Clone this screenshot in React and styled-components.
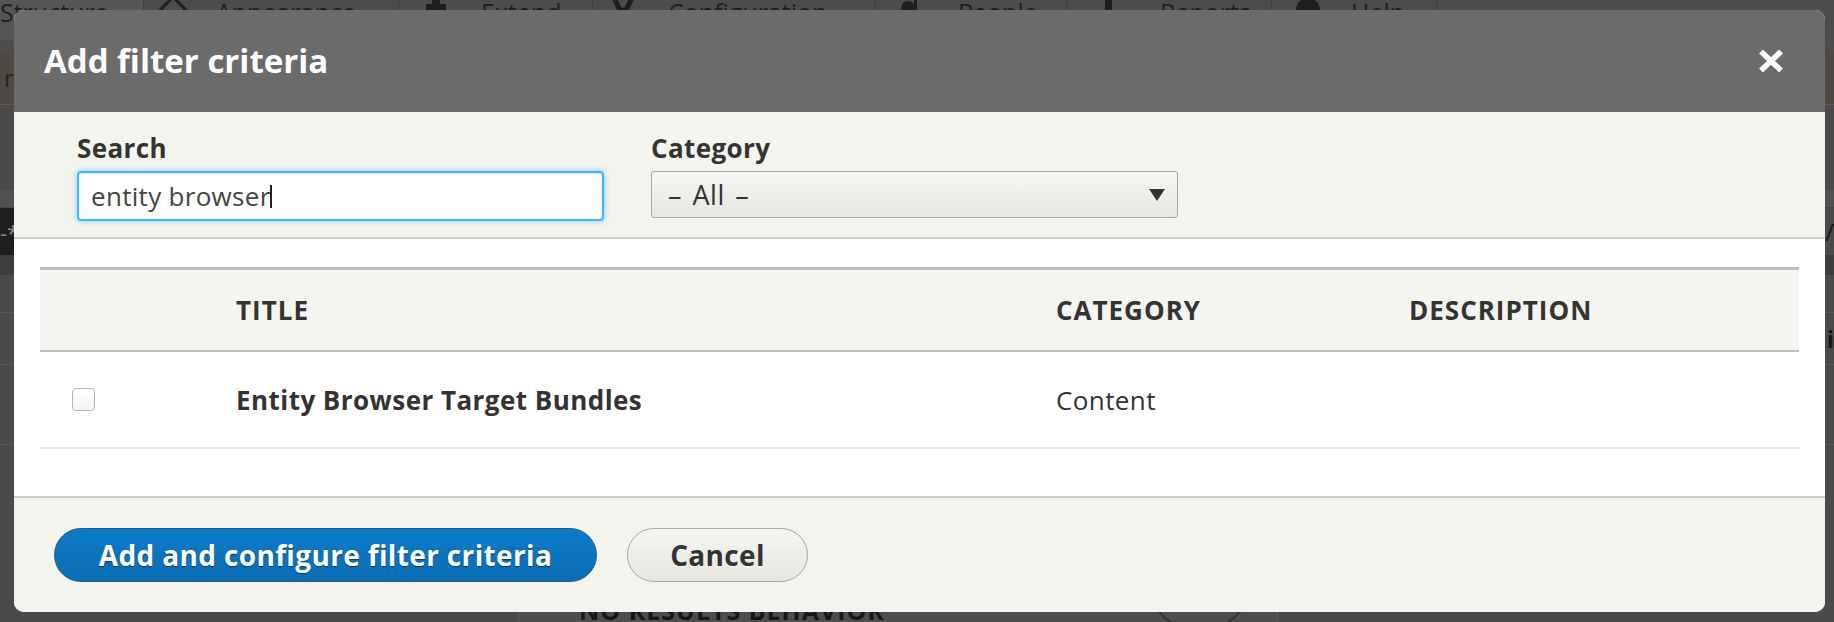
import React from 'react';
import styled, { createGlobalStyle } from 'styled-components';

const GlobalStyle = createGlobalStyle`
  html, body { margin: 0; padding: 0; }
  body {
    background: #4a4a4a;
    font-family: "Open Sans", "DejaVu Sans", sans-serif;
    overflow: hidden;
  }
  * { box-sizing: border-box; }
`;

/* ---------- dimmed page behind the dialog ---------- */

const Page = styled.div`
  position: relative;
  width: 1834px;
  height: 622px;
  overflow: hidden;
  background: #4a4a4a;
  display: flex;
  flex-direction: column;
`;

const Toolbar = styled.nav`
  height: 40px;
  flex: none;
  display: flex;
  background: #4c4c4c;
`;

const ToolItem = styled.div`
  width: ${p => p.$w}px;
  flex: none;
  display: flex;
  align-items: flex-start;
  gap: 28px;
  padding-left: ${p => p.$pad}px;
  border-right: 1px solid #3f3f3f;
  background: ${p => (p.$active ? '#565656' : 'transparent')};
  color: #1e1e1e;
  font-size: 25px;
  line-height: 24px;
  white-space: nowrap;
  overflow: hidden;
`;

const ToolIcon = styled.svg`
  flex: none;
  width: 30px;
  height: 24px;
  margin-top: -6px;
`;

const Band = styled.div`
  height: ${p => p.$h}px;
  flex: none;
  display: flex;
  align-items: center;
  background: ${p => p.$bg};
  border-bottom: ${p => (p.$line ? `1px solid ${p.$line}` : 'none')};
`;

const DarkBlock = styled.div`
  width: 320px;
  height: 100%;
  background: #1e1e1e;
  color: #8a8a8a;
  font-size: 22px;
  display: flex;
  align-items: center;
`;

const EdgeText = styled.span`
  margin-left: ${p => p.$at}px;
  color: ${p => p.$color || '#161616'};
  font-size: 24px;
  font-weight: ${p => (p.$bold ? 700 : 400)};
`;

const Spacer = styled.div`
  flex: 1;
`;

const BottomArea = styled.div`
  height: 30px;
  flex: none;
  display: flex;
`;

const BottomPanel = styled.div`
  margin-left: 518px;
  width: 760px;
  border-left: 1px solid #5a5a5a;
  border-right: 1px solid #5a5a5a;
  background: #4d4d4d;
  display: flex;
  align-items: flex-start;
  padding-left: 60px;
  padding-top: 6px;
  gap: 265px;
`;

const BottomHeading = styled.span`
  color: #161616;
  font-size: 25px;
  font-weight: 700;
  line-height: 24px;
  letter-spacing: 1px;
`;

const BottomKnob = styled.div`
  width: 99px;
  height: 60px;
  margin-top: -30px;
  border: 2px solid #333;
  border-radius: 0 0 40px 40px;
`;

/* ---------- dialog ---------- */

const Dialog = styled.div`
  position: absolute;
  left: 14px;
  top: 10px;
  width: 1811px;
  height: 602px;
  border-radius: 10px;
  overflow: hidden;
  background: #ffffff;
  display: flex;
  flex-direction: column;
  color: #333;
`;

const Header = styled.div`
  height: 102px;
  flex: none;
  background: #6b6b6b;
  display: flex;
  align-items: center;
  justify-content: space-between;
  padding: 0 41px 0 30px;
`;

const Title = styled.h1`
  margin: 0;
  color: #fff;
  font-size: 33px;
  font-weight: 700;
  letter-spacing: 0;
  line-height: 40px;
`;

const CloseButton = styled.button`
  width: 26px;
  height: 24px;
  padding: 0;
  border: 0;
  background: none;
  display: flex;
  cursor: pointer;
`;

const FilterBar = styled.div`
  height: 127px;
  flex: none;
  background: #f3f4ee;
  border-bottom: 2px solid #cfcfcb;
  display: flex;
  gap: 47px;
  padding: 20px 0 0 63px;
`;

const Field = styled.div`
  width: 527px;
  display: flex;
  flex-direction: column;
`;

const Label = styled.label`
  font-size: 26px;
  font-weight: 700;
  line-height: 32px;
  letter-spacing: 0.4px;
  color: #333;
  margin-bottom: 7px;
`;

const SearchBox = styled.div`
  height: 50px;
  background: #fff;
  border: 2px solid #40b6ff;
  border-radius: 4px;
  box-shadow: inset 0 1px 3px rgba(0, 0, 0, 0.12), 0 0 6px #7ccbff;
  display: flex;
  align-items: center;
  padding-left: 12px;
  font-size: 26px;
  letter-spacing: 0.3px;
  color: #444;
`;

const Caret = styled.span`
  width: 2px;
  height: 23px;
  background: #222;
  margin-left: -1px;
`;

const SelectBox = styled.div`
  height: 47px;
  border: 1px solid #a6a6a6;
  border-radius: 3px;
  background: linear-gradient(to bottom, #f6f6f3, #e7e7e1);
  display: flex;
  align-items: center;
  justify-content: space-between;
  padding: 0 12px 0 16px;
  font-size: 27px;
  letter-spacing: 0.5px;
  word-spacing: 3px;
  color: #333;
`;

const Arrow = styled.span`
  width: 0;
  height: 0;
  border-left: 8.5px solid transparent;
  border-right: 8.5px solid transparent;
  border-top: 12px solid #333;
`;

const Content = styled.div`
  flex: 1;
  background: #fff;
  padding: 28px 26px 0;
`;

const Table = styled.div`
  border-top: 3px solid #bfbfba;
`;

const Row = styled.div`
  display: grid;
  grid-template-columns: 196px 820px 353px 1fr;
  align-items: center;
  height: ${p => (p.$head ? 82 : 97)}px;
  background: ${p => (p.$head ? '#f4f4f0' : '#fff')};
  border-bottom: 2px solid ${p => (p.$head ? '#bfbfba' : '#e6e6e1')};
`;

const HeadCell = styled.div`
  font-size: 26px;
  font-weight: 700;
  letter-spacing: 1px;
  text-transform: uppercase;
  color: #333;
`;

const Cell = styled.div`
  font-size: 26px;
  font-weight: ${p => (p.$bold ? 700 : 400)};
  letter-spacing: ${p => (p.$bold ? '0.45px' : '0.4px')};
  color: #333;
  padding-left: ${p => p.$pad || 0}px;
  display: flex;
  align-items: center;
`;

const Checkbox = styled.span`
  width: 23px;
  height: 23px;
  border: 1px solid #b4b4b4;
  border-radius: 4px;
  background: linear-gradient(to bottom, #ffffff, #f4f4f4);
`;

const Footer = styled.div`
  height: 116px;
  flex: none;
  background: #f3f4ee;
  border-top: 2px solid #cacaca;
  display: flex;
  align-items: flex-start;
  gap: 30px;
  padding: 30px 0 0 40px;
`;

const Button = styled.button`
  height: 54px;
  width: ${p => p.$w}px;
  border-radius: 27px;
  font-family: inherit;
  font-size: 28px;
  font-weight: 700;
  letter-spacing: 0.35px;
  cursor: pointer;
  padding: 0;
  border: 1px solid ${p => (p.$primary ? '#1e5c90' : '#a6a6a6')};
  color: ${p => (p.$primary ? '#fff' : '#333')};
  background: ${p =>
    p.$primary
      ? 'linear-gradient(to bottom, #0c7bc8, #0b6db3)'
      : 'linear-gradient(to bottom, #f6f6f3, #e7e7df)'};
  text-shadow: ${p =>
    p.$primary ? '0 1px 1px rgba(0,0,0,0.5)' : '0 1px rgba(255,255,255,0.6)'};
`;

const toolItems = [
  { label: 'Structure', w: 144, pad: 0, active: true, icon: null },
  { label: 'Appearance', w: 255, pad: 14, icon: 'appearance' },
  { label: 'Extend', w: 194, pad: 24, icon: 'extend' },
  { label: 'Configuration', w: 283, pad: 17, icon: 'config' },
  { label: 'People', w: 191, pad: 24, icon: 'people' },
  { label: 'Reports', w: 205, pad: 35, icon: 'reports' },
  { label: 'Help', w: 165, pad: 21, icon: 'help' },
];

function ToolGlyph({ kind }) {
  if (!kind) return null;
  const c = '#1e1e1e';
  return (
    <ToolIcon viewBox="0 0 30 24">
      {kind === 'appearance' && (
        <path d="M15 3 L27 15 L15 27 L3 15 Z" fill="none" stroke={c} strokeWidth="3" />
      )}
      {kind === 'extend' && (
        <>
          <rect x="3" y="10" width="20" height="14" fill={c} />
          <rect x="9" y="4" width="8" height="8" fill={c} />
        </>
      )}
      {kind === 'config' && <path d="M4 4 L10 16 L16 16 L22 4" fill="none" stroke={c} strokeWidth="5" />}
      {kind === 'people' && (
        <>
          <circle cx="8" cy="14" r="7" fill={c} />
          <rect x="14" y="4" width="3" height="20" fill={c} />
        </>
      )}
      {kind === 'reports' && <rect x="3" y="6" width="7" height="18" fill={c} />}
      {kind === 'help' && <circle cx="15" cy="16" r="12" fill={c} />}
    </ToolIcon>
  );
}

export default function App() {
  return (
    <>
      <GlobalStyle />
      <Page>
        <Toolbar>
          {toolItems.map(t => (
            <ToolItem key={t.label} $w={t.w} $pad={t.pad} $active={t.active}>
              <ToolGlyph kind={t.icon} />
              <span>{t.label}</span>
            </ToolItem>
          ))}
        </Toolbar>
        <Band $h={10} $bg="#4d4d4d" />
        <Band $h={55} $bg="#4d4a43" $line="#6a5d3e">
          <EdgeText $at={4} $color="#2a220f">rr</EdgeText>
        </Band>
        <Band $h={85} $bg="#4a4a4a" />
        <Band $h={18} $bg="#515151" $line="#444" />
        <Band $h={47} $bg="#4a4a4a">
          <DarkBlock>-*</DarkBlock>
          <EdgeText $at={1508}>/</EdgeText>
        </Band>
        <Band $h={20} $bg="#3d3d3d" />
        <Band $h={38} $bg="#4a4a4a" $line="#575757" />
        <Band $h={52} $bg="#4a4a4a" $line="#575757">
          <EdgeText $at={1798} $bold>Edit</EdgeText>
        </Band>
        <Band $h={80} $bg="#4a4a4a" $line="#575757" />
        <Spacer />
        <BottomArea>
          <BottomPanel>
            <BottomHeading>NO RESULTS BEHAVIOR</BottomHeading>
            <BottomKnob />
          </BottomPanel>
        </BottomArea>

        <Dialog role="dialog" aria-label="Add filter criteria">
          <Header>
            <Title>Add filter criteria</Title>
            <CloseButton aria-label="Close">
              <svg width="26" height="24" viewBox="0 0 26 24">
                <path
                  d="M3 2.5 L23 21.5 M23 2.5 L3 21.5"
                  stroke="#fff"
                  strokeWidth="5.5"
                  strokeLinecap="butt"
                  fill="none"
                />
              </svg>
            </CloseButton>
          </Header>

          <FilterBar>
            <Field>
              <Label>Search</Label>
              <SearchBox role="textbox">
                <span>entity browser</span>
                <Caret />
              </SearchBox>
            </Field>
            <Field>
              <Label>Category</Label>
              <SelectBox role="combobox">
                <span>– All –</span>
                <Arrow />
              </SelectBox>
            </Field>
          </FilterBar>

          <Content>
            <Table>
              <Row $head>
                <HeadCell />
                <HeadCell>Title</HeadCell>
                <HeadCell>Category</HeadCell>
                <HeadCell>Description</HeadCell>
              </Row>
              <Row>
                <Cell $pad={32}>
                  <Checkbox />
                </Cell>
                <Cell $bold>Entity Browser Target Bundles</Cell>
                <Cell>Content</Cell>
                <Cell />
              </Row>
            </Table>
          </Content>

          <Footer>
            <Button $primary $w={543}>Add and configure filter criteria</Button>
            <Button $w={181}>Cancel</Button>
          </Footer>
        </Dialog>
      </Page>
    </>
  );
}
